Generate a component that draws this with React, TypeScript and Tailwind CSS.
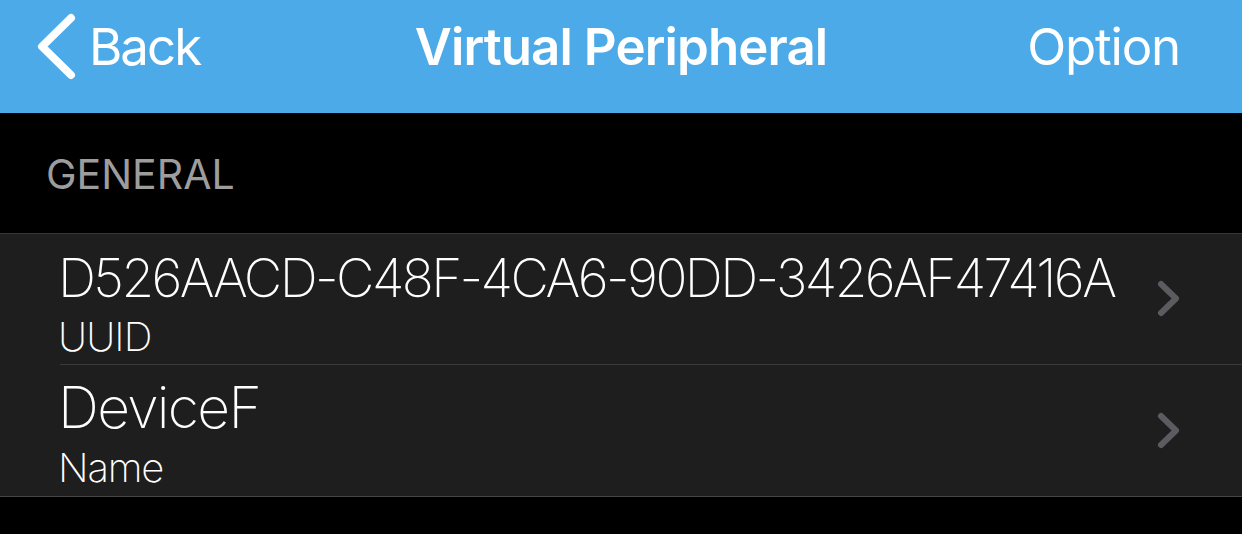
import React from 'react';

const rows = [
    { value: 'D526AACD-C48F-4CA6-90DD-3426AF47416A', label: 'UUID', valueClass: 'text-[53px] tracking-[-2.6px] pt-[14px]', labelClass: 'mt-[6px] tracking-[-0.9px]', divider: true },
    { value: 'DeviceF', label: 'Name', valueClass: 'text-[57px] tracking-[-1.7px] pt-[13px]', labelClass: 'mt-[7px] tracking-[-1.2px]', divider: false },
];

const Chevron = () => (
    <svg width="30" height="44" viewBox="0 0 30 44" className="shrink-0">
        <polyline points="7,7 22,21.5 7,36" fill="none" stroke="#5b5b60" strokeWidth="6" strokeLinecap="round" strokeLinejoin="round" />
    </svg>
);

export default function App() {
    return (
        <div className="w-[1242px] h-[534px] bg-black overflow-hidden font-['Inter','Liberation_Sans',sans-serif]">
            {/* Nav bar */}
            <div className="h-[113px] pb-[20px] bg-[#4caae8] grid grid-cols-[1fr_auto_1fr] items-center text-white">
                <div className="flex items-center pl-[34px]">
                    <svg width="46" height="70" viewBox="0 0 46 70" className="shrink-0">
                        <polyline points="37,6 8,34.5 37,63" fill="none" stroke="#ffffff" strokeWidth="8" strokeLinecap="round" strokeLinejoin="round" />
                    </svg>
                    <span className="text-[51px] ml-[9px] leading-none tracking-[-2px]">Back</span>
                </div>
                <div className="text-[51px] font-semibold leading-none tracking-[-0.9px]">Virtual Peripheral</div>
                <div className="flex justify-end pr-[62px]">
                    <span className="text-[51px] leading-none tracking-[-1.2px]">Option</span>
                </div>
            </div>

            {/* Section header */}
            <div className="h-[121px] flex items-end pl-[46px] pb-[38px] border-b border-[#363636]">
                <span className="text-[41px] leading-none text-[#9d9d9d] tracking-[0px]">GENERAL</span>
            </div>

            {/* Rows */}
            <div className="bg-[#1e1e1e] border-b border-[#464646]">
                {rows.map((row) => (
                    <div key={row.label} className="flex pl-[60px]">
                        <div className={`flex-1 h-[131px] flex items-center pr-[58px] ${row.divider ? 'border-b border-[#3a3a3a]' : ''}`}>
                            <div className="flex-1 self-start -ml-[2px] flex flex-col text-white font-extralight whitespace-nowrap">
                                <span className={`${row.valueClass} leading-[60px] box-content`}>{row.value}</span>
                                <span className={`${row.labelClass} text-[40px] leading-[46px]`}>{row.label}</span>
                            </div>
                            <Chevron />
                        </div>
                    </div>
                ))}
            </div>
        </div>
    );
}
